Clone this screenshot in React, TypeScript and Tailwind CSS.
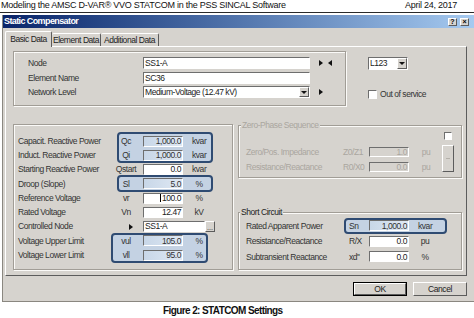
import type { ReactNode } from 'react';

const TXT = 'text-[8.5px] leading-none tracking-[-0.45px]';
const SUNKEN = 'border border-t-[#6e6e6e] border-l-[#6e6e6e] border-b-white border-r-white';
const RAISED = 'border border-t-white border-l-white border-b-[#5c5c5c] border-r-[#5c5c5c]';
const GROUP = 'border border-[#a19d96] shadow-[inset_1px_1px_0_#fbfaf8,1px_1px_0_#fbfaf8]';
const HL = 'absolute rounded-[4px] border-2 border-[#2f4b72] bg-[#c4d2e3]';

function TriR() {
  return (
    <svg width="4" height="6" viewBox="0 0 4 6">
      <path d="M0 0L4 3L0 6Z" fill="#111" />
    </svg>
  );
}

function TriL() {
  return (
    <svg width="4" height="6" viewBox="0 0 4 6">
      <path d="M4 0L0 3L4 6Z" fill="#111" />
    </svg>
  );
}

function TriDown() {
  return (
    <svg width="6" height="3" viewBox="0 0 6 3">
      <path d="M0 0H6L3 3Z" fill="#111" />
    </svg>
  );
}

type Tone = 'white' | 'hl' | 'off';

function Field({ w, h = 'h-[11px]', v, tone = 'white', left = false, cursor = false }: { w: string; h?: string; v: string; tone?: Tone; left?: boolean; cursor?: boolean }) {
  const bg =
    tone === 'hl'
      ? 'bg-linear-to-r from-[#c8d7e8] to-[#dfe8f3] text-[#333]'
      : tone === 'off'
        ? 'bg-[#d6d3ce] text-[#aaa69f]'
        : 'bg-white text-[#222]';
  return (
    <div className={`${w} ${h} ${SUNKEN} ${bg} ${TXT} shrink-0 flex items-center ${left ? 'justify-start pl-[1px]' : 'justify-end pr-[1px]'}`}>
      {cursor && <span className="w-px h-[8px] bg-black mr-[1px]" />}
      {v}
    </div>
  );
}

function Combo({ w, h, v }: { w: string; h: string; v: string }) {
  return (
    <div className={`${w} ${h} ${SUNKEN} bg-white flex items-stretch shrink-0`}>
      <span className={`flex-1 pl-[1px] flex items-center ${TXT} text-[#222]`}>{v}</span>
      <span className={`w-[10px] ${RAISED} bg-[#d6d3ce] flex items-center justify-center`}>
        <TriDown />
      </span>
    </div>
  );
}

function TopRow({ label, children }: { label: string; children: ReactNode }) {
  return (
    <div className="flex items-center h-[14.5px]">
      <span className={`w-[115px] shrink-0 ${TXT} text-[#333]`}>{label}</span>
      {children}
    </div>
  );
}

type Param = { l: string; s: string; v: string; u: string; hl?: boolean; cursor?: boolean };

const LEFT_ROWS: Param[] = [
  { l: 'Capacit. Reactive Power', s: 'Qc', v: '1,000.0', u: 'kvar', hl: true },
  { l: 'Induct. Reactive Power', s: 'Qi', v: '1,000.0', u: 'kvar', hl: true },
  { l: 'Starting Reactive Power', s: 'Qstart', v: '0.0', u: 'kvar' },
  { l: 'Droop (Slope)', s: 'Sl', v: '5.0', u: '%', hl: true },
  { l: 'Reference Voltage', s: 'vr', v: '100.0', u: '%', cursor: true },
  { l: 'Rated Voltage', s: 'Vn', v: '12.47', u: 'kV' },
];

const LIMIT_ROWS: Param[] = [
  { l: 'Voltage Upper Limit', s: 'vul', v: '105.0', u: '%', hl: true },
  { l: 'Voltage Lower Limit', s: 'vll', v: '95.0', u: '%', hl: true },
];

function ParamRow({ p }: { p: Param }) {
  return (
    <div className="flex items-center h-[14.25px]">
      <span className={`w-[97px] shrink-0 ${TXT} text-[#333]`}>{p.l}</span>
      <span className={`w-[22px] shrink-0 text-center ${TXT} text-[#333]`}>{p.s}</span>
      <span className="w-[6px] shrink-0" />
      <Field w="w-[40px]" v={p.v} tone={p.hl ? 'hl' : 'white'} cursor={p.cursor} />
      <span className={`ml-[9px] w-[14px] text-center ${TXT} text-[#333]`}>{p.u}</span>
    </div>
  );
}

function SideRow({ l, s, v, u, symW, labelW, unitMl, tone, h, off }: { l: string; s: string; v: string; u: string; symW: string; labelW: string; unitMl: string; tone: Tone; h: string; off?: boolean }) {
  const c = off ? 'text-[#aaa69f]' : 'text-[#333]';
  return (
    <div className={`flex items-center ${h}`}>
      <span className={`${labelW} shrink-0 ${TXT} ${c}`}>{l}</span>
      <span className={`${symW} shrink-0 ${TXT} ${c}`}>{s}</span>
      <Field w="w-[40px]" h={off ? 'h-[10px]' : 'h-[11px]'} v={v} tone={tone} />
      <span className={`${unitMl} w-[14px] text-center ${TXT} ${c}`}>{u}</span>
    </div>
  );
}

export default function App() {
  return (
    <div className="w-[474px] h-[318px] bg-white overflow-hidden font-['Liberation_Sans',Arial,sans-serif]">
      {/* document header */}
      <div className="h-[12.5px] border-b-[1.5px] border-[#2a2a2a] flex justify-between items-start text-[9px] leading-[11px] tracking-[-0.25px] text-[#111]">
        <span className="pl-[1px]">Modeling the AMSC D-VAR® VVO STATCOM in the PSS SINCAL Software</span>
        <span className="pr-[17px]">April 24, 2017</span>
      </div>

      {/* dialog */}
      <div className="ml-[2px] mt-[2.5px] w-[472px] h-[287px] bg-[#d6d3ce] border-l border-b border-[#8a8780] flex flex-col">
        <div className="h-[13px] shrink-0 bg-linear-to-r from-[#0a246a] to-[#a6caf0] flex items-center justify-between pl-[1px] pr-[5px]">
          <span className="text-[9px] leading-none font-bold tracking-[-0.6px] text-white">Static Compensator</span>
          <div className="flex gap-[3px]">
            <span className={`w-[9px] h-[8px] ${RAISED} bg-[#d6d3ce] flex items-center justify-center text-[7px] leading-none font-bold text-black`}>?</span>
            <span className={`w-[9px] h-[8px] ${RAISED} bg-[#d6d3ce] flex items-center justify-center text-[7px] leading-none font-bold text-black`}>×</span>
          </div>
        </div>

        {/* tabs */}
        <div className="h-[18px] shrink-0 flex items-end pl-[2px]">
          <div className={`relative z-10 -mb-[1px] w-[47px] h-[16px] bg-[#d6d3ce] border-t border-l border-r border-t-white border-l-white border-r-[#5c5c5c] rounded-t-[2px] flex items-center justify-center ${TXT} text-[#222]`}>Basic Data</div>
          <div className={`w-[49px] h-[13px] border-t border-r border-t-white border-r-[#5c5c5c] rounded-t-[2px] flex items-center justify-center ${TXT} text-[#222]`}>Element Data</div>
          <div className={`w-[58px] h-[13px] border-t border-r border-t-white border-r-[#5c5c5c] rounded-t-[2px] flex items-center justify-center ${TXT} text-[#222]`}>Additional Data</div>
        </div>

        {/* tab panel */}
        <div className="ml-[2px] w-[462px] h-[230px] shrink-0 border border-t-white border-l-white border-r-[#5c5c5c] border-b-[#5c5c5c] flex flex-col">
          <div className="flex">
            <div className={`w-[333px] h-[55px] ml-[7px] mt-[4px] ${GROUP} pt-[4px] pl-[14px]`}>
              <TopRow label="Node">
                <Field w="w-[167px]" h="h-[12px]" v="SS1-A" left />
                <span className="ml-[9px] flex gap-[5px]">
                  <TriR />
                  <TriL />
                </span>
              </TopRow>
              <TopRow label="Element Name">
                <Field w="w-[167px]" h="h-[12px]" v="SC36" left />
              </TopRow>
              <TopRow label="Network Level">
                <Combo w="w-[167px]" h="h-[12px]" v="Medium-Voltage (12.47 kV)" />
                <span className="ml-[9px] flex">
                  <TriR />
                </span>
              </TopRow>
            </div>
            <div className="ml-[22px] mt-[10px] flex flex-col">
              <Combo w="w-[40px]" h="h-[13px]" v="L123" />
              <div className="mt-[20px] flex items-center">
                <span className={`w-[9px] h-[9px] ${SUNKEN} bg-white`} />
                <span className={`ml-[3px] ${TXT} text-[#333]`}>Out of service</span>
              </div>
            </div>
          </div>

          <div className="mt-[18px] ml-[7px] flex gap-[5px]">
            {/* main parameters */}
            <div className={`relative w-[220px] h-[146px] ${GROUP}`}>
              <div className={`${HL} left-[103px] top-[7px] w-[96px] h-[31px]`} />
              <div className={`${HL} left-[103px] top-[50px] w-[96px] h-[17px]`} />
              <div className={`${HL} left-[97px] top-[108px] w-[97px] h-[30px]`} />
              <div className="relative pt-[9px] pl-[4px]">
                {LEFT_ROWS.map((p) => (
                  <ParamRow key={p.l} p={p} />
                ))}
                <div className="flex items-center h-[14.25px]">
                  <span className={`w-[97px] shrink-0 ${TXT} text-[#333]`}>Controlled Node</span>
                  <span className="w-[22px] shrink-0 flex justify-end pr-[4px]">
                    <TriR />
                  </span>
                  <span className="w-[6px] shrink-0" />
                  <Field w="w-[62px]" v="SS1-A" left />
                  <span className={`w-[10px] h-[11px] ${RAISED} bg-[#d6d3ce] flex items-end justify-center text-[7px] leading-[7px] text-[#222]`}>...</span>
                </div>
                {LIMIT_ROWS.map((p) => (
                  <ParamRow key={p.l} p={p} />
                ))}
              </div>
            </div>

            {/* right column */}
            <div className="w-[224px] h-[146px] flex flex-col justify-between">
              <div className={`relative mt-[1px] h-[53px] ${GROUP} flex`}>
                <span className={`absolute -top-[5px] left-[2px] px-[1px] bg-[#d6d3ce] ${TXT} text-[#aaa69f]`}>Zero-Phase Sequence</span>
                <div className="w-[203px] pt-[19px] pl-[7px]">
                  <SideRow l="Zero/Pos. Impedance" s="Z0/Z1" v="1.0" u="pu" labelW="w-[97px]" symW="w-[26px]" unitMl="ml-[10px]" tone="off" h="h-[14.5px]" off />
                  <SideRow l="Resistance/Reactance" s="R0/X0" v="0.0" u="pu" labelW="w-[97px]" symW="w-[26px]" unitMl="ml-[10px]" tone="off" h="h-[14.5px]" off />
                </div>
                <div className="w-[12px] flex flex-col">
                  <span className={`ml-[2px] mt-[6px] w-[8px] h-[8px] ${SUNKEN} bg-white`} />
                  <span className={`mt-[5px] w-[12px] h-[27px] ${RAISED} bg-[#d6d3ce] flex items-center justify-center`}>
                    <span className="w-[4px] h-px bg-[#b5b1aa]" />
                  </span>
                </div>
              </div>

              <div className={`relative h-[58px] ${GROUP}`}>
                <span className={`absolute -top-[5px] left-[1px] px-[1px] bg-[#d6d3ce] ${TXT} text-[#222]`}>Short Circuit</span>
                <div className={`${HL} left-[105px] top-[5px] w-[103px] h-[16px]`} />
                <div className="relative pt-[5px] pl-[7px]">
                  <SideRow l="Rated Apparent Power" s="Sn" v="1,000.0" u="kvar" labelW="w-[103px]" symW="w-[20px]" unitMl="ml-[9px]" tone="hl" h="h-[15.5px]" />
                  <SideRow l="Resistance/Reactance" s="R/X" v="0.0" u="pu" labelW="w-[103px]" symW="w-[20px]" unitMl="ml-[9px]" tone="white" h="h-[15.5px]" />
                  <SideRow l="Subtransient Reactance" s="xd''" v="0.0" u="%" labelW="w-[103px]" symW="w-[20px]" unitMl="ml-[9px]" tone="white" h="h-[15.5px]" />
                </div>
              </div>
            </div>
          </div>
        </div>

        {/* buttons */}
        <div className="mt-[6px] flex justify-end gap-[6px] pr-[7px]">
          <div className="w-[54px] h-[14px] border border-black">
            <div className={`w-full h-full ${RAISED} flex items-center justify-center ${TXT} text-[#222]`}>OK</div>
          </div>
          <div className={`w-[54px] h-[14px] ${RAISED} flex items-center justify-center ${TXT} text-[#222]`}>Cancel</div>
        </div>
      </div>

      <div className="mt-[3px] pl-[163px] text-[10px] leading-[12px] font-bold tracking-[-0.6px] text-[#111]">Figure 2: STATCOM Settings</div>
    </div>
  );
}
